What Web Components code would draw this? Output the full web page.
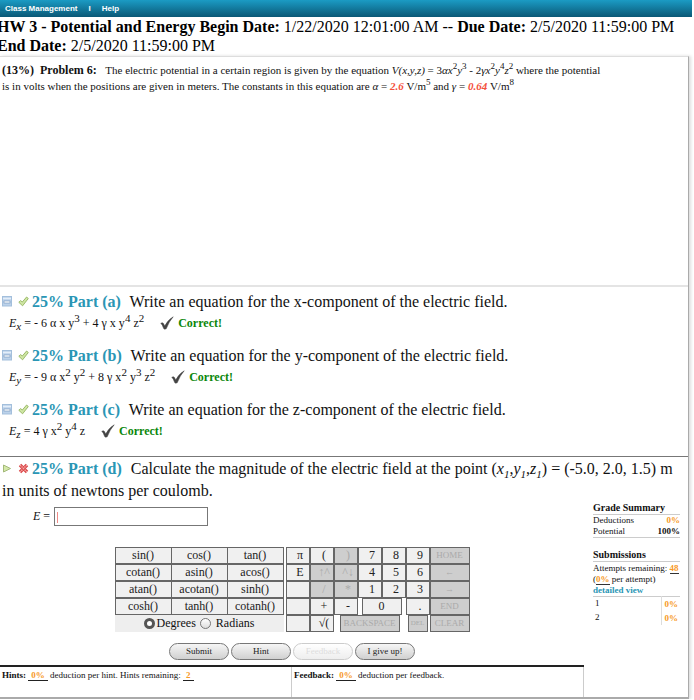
<!DOCTYPE html>
<html lang="en">
<head>
<meta charset="utf-8">
<title>HW 3 - Potential and Energy</title>
<style>
  body {
    margin: 0;
    background: #fff;
    color: #111;
    font-family: "Liberation Serif", "Times New Roman", serif;
    font-size: 12px;
    overflow-x: hidden;
  }
</style>
</head>
<body>
  <main-app></main-app>

<script>
class NavBar extends HTMLElement {
  constructor() {
    super()
    this.attachShadow({ mode: 'open' })
  }

  connectedCallback() {
    this.shadowRoot.innerHTML = `
      <style>
        :host {
          display: block;
          margin-right: 2px;
          background: linear-gradient(#1b9bc4, #0a5876);
          font: bold 8px/17px "Liberation Sans", Arial, sans-serif;
        }
        nav {
          display: flex;
          gap: 11px;
          padding-left: 5px;
          color: #fff;
        }
        a {
          color: inherit;
          text-decoration: none;
        }
      </style>
      <nav>
        <a href="#classes">Class Management</a>
        <span>I</span>
        <a href="#help">Help</a>
      </nav>
    `
  }
}

class HomeworkTitle extends HTMLElement {
  constructor() {
    super()
    this.attachShadow({ mode: 'open' })
  }

  connectedCallback() {
    this.shadowRoot.innerHTML = `
      <style>
        :host {
          display: block;
          margin-left: -3px;
          padding-bottom: 1px;
        }
        h1 {
          margin: 0;
          font-size: 16px;
          line-height: 19px;
          font-weight: normal;
          color: #000;
        }
      </style>
      <h1><slot></slot></h1>
    `
  }
}

class ProblemStatement extends HTMLElement {
  constructor() {
    super()
    this.attachShadow({ mode: 'open' })
  }

  connectedCallback() {
    this.shadowRoot.innerHTML = `
      <style>
        :host {
          display: block;
          box-sizing: border-box;
          min-height: 230px;
          padding: 5px 2px;
          border-bottom: 2px solid #e4e4e4;
          font-size: 11px;
        }
        p {
          margin: 0;
          line-height: 16px;
        }
        b {
          margin-right: 6px;
          font-size: 12px;
        }
      </style>
      <p><b>(${this.getAttribute("weight")})&nbsp; ${this.getAttribute("label")}:</b> <slot></slot></p>
    `
  }
}

const partIcons = {
  closed: `
    <svg width="10" height="11" viewBox="0 0 10 11">
      <rect x=".5" y=".5" width="9" height="9.5" fill="#bcd2ea" stroke="#a3bfdc"/>
      <path d="M1 2.5h8" stroke="#e4eef9" stroke-width="1.5"/>
      <rect x="2" y="5" width="6" height="2" fill="#fff" stroke="#6d8fb8" stroke-width=".6"/>
    </svg>`,
  open: `
    <svg width="10" height="11" viewBox="0 0 10 11">
      <path d="M1.5 2L8.5 5.5L1.5 9Z" fill="#d4e8a8" stroke="#a3b97a" stroke-linejoin="round"/>
    </svg>`,
  right: `
    <svg width="11" height="11" viewBox="0 0 11 11">
      <path d="M.8 6.3L2.6 4.6L4.3 6L8.6 1L10.3 2.5L4.6 9.8Z" fill="#cfe6a4" stroke="#93b35f" stroke-linejoin="round" stroke-width=".9"/>
    </svg>`,
  wrong: `
    <svg width="11" height="11" viewBox="0 0 11 11">
      <path d="M2 2L9 9M9 2L2 9" stroke="#d9484a" stroke-width="3.4"/>
      <path d="M2 2L9 9M9 2L2 9" stroke="#f7a9a6" stroke-width="1.4" stroke-dasharray="1.4 .8"/>
    </svg>`
}

class ProblemPart extends HTMLElement {
  constructor() {
    super()
    this.attachShadow({ mode: 'open' })
  }

  connectedCallback() {
    const open = this.hasAttribute("open")

    this.shadowRoot.innerHTML = `
      <style>
        :host {
          display: block;
        }
        :host([open]) {
          margin-top: 4px;
          border-top: 1px solid #777;
        }
        h2 {
          margin: 0;
          padding: 1px 2px 0;
          font-size: 16px;
          line-height: 22px;
          font-weight: normal;
        }
        b {
          margin-right: 5px;
          color: #2a96b5;
        }
        .toggle svg {
          margin-right: 6px;
        }
        .state svg {
          margin-right: 3px;
        }
      </style>
      <h2><span class="toggle">${(open ? partIcons.open : partIcons.closed).trim()}</span><span
        class="state">${(open ? partIcons.wrong : partIcons.right).trim()}</span><b>25% Part (${this.getAttribute("letter")})</b>
        <slot name="question"></slot></h2>
      <slot></slot>
    `
  }
}

class CorrectAnswer extends HTMLElement {
  constructor() {
    super()
    this.attachShadow({ mode: 'open' })
  }

  connectedCallback() {
    this.shadowRoot.innerHTML = `
      <style>
        :host {
          display: flex;
          align-items: center;
          gap: 16px;
          height: 20px;
          padding: 0 9px 11px;
          font-size: 12px;
          line-height: 20px;
        }
        strong {
          display: flex;
          align-items: center;
          gap: 4px;
          color: #0b870b;
        }
      </style>
      <span><slot></slot></span>
      <strong>
        <svg width="14" height="14" viewBox="0 0 14 14">
          <path d="M.8 7.2Q2.7 6.2 3.5 7.6L4.7 10Q7.6 4.2 13.2.8Q9 5.4 6.2 12.8Q4.4 13.6 3.7 12.6Q2.5 8.7.8 7.2Z" fill="#444" stroke="#444" stroke-width=".5"/>
        </svg>
        Correct!
      </strong>
    `
  }
}

class AnswerField extends HTMLElement {
  constructor() {
    super()
    this.attachShadow({ mode: 'open' })
  }

  connectedCallback() {
    this.shadowRoot.innerHTML = `
      <style>
        :host {
          display: flex;
          align-items: center;
          gap: 4px;
          padding-left: 33px;
          font-size: 12px;
        }
        input {
          box-sizing: border-box;
          width: 154px;
          height: 19px;
          border: 1px solid #777;
          padding: 0 4px;
          font: inherit;
          /* resting caret */
          background: linear-gradient(#f08a86, #f08a86) 2px 4px / 1px 11px no-repeat #fff;
        }
      </style>
      <label for="answer"><i>E</i> =</label>
      <input id="answer" type="text">
    `
  }
}

class KeyPad extends HTMLElement {
  constructor() {
    super()
    this.attachShadow({ mode: 'open' })
  }

  _key(label, classes = "") {
    if (!label) return `<span class="key"></span>`

    const disabled = classes.includes("off") ? "disabled" : ""
    return `<button type="button" class="key ${classes}" ${disabled}>${label}</button>`
  }

  connectedCallback() {
    const functions = [
      "sin()", "cos()", "tan()",
      "cotan()", "asin()", "acos()",
      "atan()", "acotan()", "sinh()",
      "cosh()", "tanh()", "cotanh()"
    ]
    const keys = [
      ["π"], ["("], [")", "off"], ["7"], ["8"], ["9"], ["HOME", "off word"],
      ["E"], ["↑^", "off"], ["^↓", "off"], ["4"], ["5"], ["6"], ["←", "off word"],
      [""], ["/", "off"], ["*", "off"], ["1"], ["2"], ["3"], ["→", "off word"],
      [""], ["+"], ["-"], ["0", "zero"], ["."], ["END", "off word"],
      [""], ["√("], ["BACKSPACE", "off word backspace"], ["DEL", "off del"], ["CLEAR", "off word"]
    ]

    this.shadowRoot.innerHTML = `
      <style>
        :host {
          display: flex;
          justify-content: center;
          gap: 2px;
          font-size: 12px;
        }
        .functions, .keys {
          display: grid;
          grid-auto-rows: 17px;
        }
        .functions {
          grid-template-columns: repeat(3, 56px);
          border-left: 1px solid #666;
        }
        .keys {
          grid-template-columns: repeat(6, 24px) 40px;
        }
        .key {
          box-sizing: border-box;
          min-width: 0;
          margin: 0;
          padding: 0;
          border: 1px solid #666;
          border-radius: 0;
          background: #f0f0f0;
          color: #222;
          font: inherit;
          line-height: 15px;
          white-space: nowrap;
        }
        .functions .key {
          border-left: 0;
        }
        .keys .key {
          padding-left: 5px;
        }
        .keys .off {
          background: #cecece;
          color: #aaa;
        }
        .keys .word {
          padding: 0;
          font-size: 9px;
        }
        .keys .zero {
          grid-column: span 2;
          margin: 0 4px;
          padding: 0;
        }
        .keys .backspace {
          grid-column: span 3;
          margin: 0 6px;
        }
        .keys .del {
          margin: 0 2px;
          padding: 0;
          font-size: 7px;
        }
        .units {
          grid-column: 1 / -1;
          display: flex;
          justify-content: center;
          align-items: center;
          gap: 4px;
          margin-left: -1px;
          background: #eee;
        }
        label {
          display: flex;
          align-items: center;
          gap: 2px;
        }
        label + label {
          gap: 5px;
        }
        input {
          appearance: none;
          box-sizing: border-box;
          width: 11px;
          height: 11px;
          margin: 0;
          border: 1px solid #777;
          border-radius: 50%;
          background: linear-gradient(#fff, #ddd);
        }
        input:checked {
          border: 3px solid #555;
          background: #fff;
        }
      </style>
      <div class="functions">
        ${functions.map(name => this._key(name)).join("")}
        <div class="units">
          <label><input type="radio" name="units" checked>Degrees</label>
          <label><input type="radio" name="units">Radians</label>
        </div>
      </div>
      <div class="keys">
        ${keys.map(([label, classes]) => this._key(label, classes)).join("")}
      </div>
    `
  }
}

class PillButton extends HTMLElement {
  constructor() {
    super()
    this.attachShadow({ mode: 'open' })
  }

  connectedCallback() {
    this.shadowRoot.innerHTML = `
      <style>
        :host {
          display: block;
        }
        button {
          display: block;
          width: 60px;
          height: 17px;
          padding: 0;
          border: 1px solid #777;
          border-radius: 9px;
          background: linear-gradient(#f6f6f6, #d0d0d0);
          color: #222;
          font: inherit;
          font-size: 9px;
          line-height: 15px;
        }
        button:disabled {
          border-color: #ccc;
          background: linear-gradient(#fff, #eee);
          color: #ddd;
        }
      </style>
      <button type="button" ${this.hasAttribute("disabled") ? "disabled" : ""}><slot></slot></button>
    `
  }
}

class GradeSummary extends HTMLElement {
  constructor() {
    super()
    this.attachShadow({ mode: 'open' })
  }

  connectedCallback() {
    this.shadowRoot.innerHTML = `
      <style>
        :host {
          display: block;
          font-size: 9px;
          line-height: 11px;
        }
        h3 {
          margin: 0;
          border-bottom: 1px solid #ccc;
          font-size: 10px;
          line-height: 12px;
        }
        table {
          width: 100%;
          border-collapse: collapse;
        }
        th, td {
          padding: 0;
          font-weight: normal;
          text-align: left;
        }
        td {
          text-align: right;
          font-weight: bold;
        }
        .grades {
          margin-bottom: 11px;
          border-bottom: 1px solid #ccc;
        }
        p {
          margin: 0;
          white-space: nowrap;
        }
        h3 + p {
          margin-top: 1px;
        }
        a {
          display: block;
          color: #2a96b5;
          font-weight: bold;
          text-decoration: none;
        }
        .attempts {
          border-top: 1px solid #ccc;
        }
        .attempts th {
          padding: 1px 2px 2px;
        }
        .attempts td {
          width: 16px;
          padding-right: 2px;
          border-left: 1px solid #ddd;
        }
        .percent {
          color: #f79a28;
        }
        u {
          border-bottom: 1px solid #333;
          text-decoration: none;
          font-weight: bold;
        }
      </style>
      <h3>Grade Summary</h3>
      <table class="grades">
        <tr><th>Deductions</th><td class="percent">0%</td></tr>
        <tr><th>Potential</th><td>100%</td></tr>
      </table>
      <h3>Submissions</h3>
      <p>Attempts remaining: <u class="percent">48</u></p>
      <p>(<u class="percent">0%</u> per attempt)</p>
      <a href="#detail">detailed view</a>
      <table class="attempts">
        <tr><th>1</th><td class="percent">0%</td></tr>
        <tr><th>2</th><td class="percent">0%</td></tr>
      </table>
    `
  }
}

class HelpFooter extends HTMLElement {
  constructor() {
    super()
    this.attachShadow({ mode: 'open' })
  }

  connectedCallback() {
    this.shadowRoot.innerHTML = `
      <style>
        :host {
          display: grid;
          grid-template-columns: 1fr 1fr;
          border-top: 2px solid #222;
          font-size: 9px;
          line-height: 12px;
        }
        div {
          min-height: 26px;
          padding: 2px;
          border-right: 1px solid #ccc;
        }
        u {
          padding: 0 3px;
          border-bottom: 1px solid #222;
          color: #f79a28;
          font-weight: bold;
          text-decoration: none;
        }
      </style>
      <div><b>Hints:</b> <u>0%</u> deduction per hint. Hints remaining: <u>2</u></div>
      <div><b>Feedback:</b> <u>0%</u> deduction per feedback.</div>
    `
  }
}

class MainApp extends HTMLElement {
  constructor() {
    super()
    this.attachShadow({ mode: 'open' })
  }

  connectedCallback() {
    this.shadowRoot.innerHTML = `
      <style>
        :host {
          display: block;
        }
        .panel {
          margin-right: 5px;
          border: 1px solid #aaa;
          border-width: 1px 1px 2px 0;
          border-top-color: #ddd;
          box-shadow: 2px 0 3px #ddd;
        }
        .parts {
          padding-top: 3px;
        }
        .work {
          display: flex;
        }
        .entry {
          flex: 1;
          padding-top: 5px;
        }
        key-pad {
          margin-top: 21px;
        }
        .actions {
          display: flex;
          justify-content: center;
          gap: 2px;
          padding: 11px 0 5px;
        }
        grade-summary {
          width: 87px;
          padding: 0 8px 0 9px;
        }
        sup, sub {
          font-size: 11px;
          line-height: 0;
        }
        problem-statement sup {
          font-size: 9px;
        }
        .value {
          color: #f4503c;
          font-weight: bold;
          font-style: italic;
        }
      </style>
      <nav-bar></nav-bar>
      <homework-title>
        <b>HW 3 - Potential and Energy</b> <b>Begin Date:</b> 1/22/2020 12:01:00 AM --
        <b>Due Date:</b> 2/5/2020 11:59:00 PM<br>
        <b>End Date:</b> 2/5/2020 11:59:00 PM
      </homework-title>
      <div class="panel">
        <problem-statement weight="13%" label="Problem 6">
          The electric potential in a certain region is given by the equation
          <i>V(x,y,z)</i> = 3<i>αx</i><sup>2</sup><i>y</i><sup>3</sup> - 2<i>γx</i><sup>2</sup><i>y</i><sup>4</sup><i>z</i><sup>2</sup>
          where the potential<br>
          is in volts when the positions are given in meters. The constants in this equation are
          <i>α</i> = <span class="value">2.6</span> V/m<sup>5</sup> and <i>γ</i> = <span class="value">0.64</span> V/m<sup>8</sup>
        </problem-statement>
        <div class="parts">
          <problem-part letter="a">
            <span slot="question">Write an equation for the x-component of the electric field.</span>
            <correct-answer><i>E<sub>x</sub></i> = - 6 α x y<sup>3</sup> + 4 γ x y<sup>4</sup> z<sup>2</sup></correct-answer>
          </problem-part>
          <problem-part letter="b">
            <span slot="question">Write an equation for the y-component of the electric field.</span>
            <correct-answer><i>E<sub>y</sub></i> = - 9 α x<sup>2</sup> y<sup>2</sup> + 8 γ x<sup>2</sup> y<sup>3</sup> z<sup>2</sup></correct-answer>
          </problem-part>
          <problem-part letter="c">
            <span slot="question">Write an equation for the z-component of the electric field.</span>
            <correct-answer><i>E<sub>z</sub></i> = 4 γ x<sup>2</sup> y<sup>4</sup> z</correct-answer>
          </problem-part>
          <problem-part letter="d" open>
            <span slot="question">Calculate the magnitude of the electric field at the point (<i>x<sub>1</sub></i>,<i>y<sub>1</sub></i>,<i>z<sub>1</sub></i>) = (-5.0, 2.0, 1.5) m<br>
              in units of newtons per coulomb.</span>
            <div class="work">
              <div class="entry">
                <answer-field></answer-field>
                <key-pad></key-pad>
                <div class="actions">
                  <pill-button>Submit</pill-button>
                  <pill-button>Hint</pill-button>
                  <pill-button disabled>Feedback</pill-button>
                  <pill-button>I give up!</pill-button>
                </div>
                <help-footer></help-footer>
              </div>
              <grade-summary></grade-summary>
            </div>
          </problem-part>
        </div>
      </div>
    `
  }
}

customElements.define("nav-bar", NavBar)
customElements.define("homework-title", HomeworkTitle)
customElements.define("problem-statement", ProblemStatement)
customElements.define("problem-part", ProblemPart)
customElements.define("correct-answer", CorrectAnswer)
customElements.define("answer-field", AnswerField)
customElements.define("key-pad", KeyPad)
customElements.define("pill-button", PillButton)
customElements.define("grade-summary", GradeSummary)
customElements.define("help-footer", HelpFooter)
customElements.define("main-app", MainApp)
</script>
</body>
</html>
